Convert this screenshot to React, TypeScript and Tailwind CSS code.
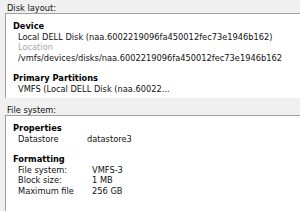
import React from 'react';

function Section({ title, children }: { title: string; children: React.ReactNode }) {
  return (
    <div>
      <div className="font-bold text-black">{title}</div>
      <div className="pl-[5px]">{children}</div>
    </div>
  );
}

export default function App() {
  return (
    <div
      className="w-[300px] h-[211px] overflow-hidden bg-[#f0f0f0] text-[9.2px] leading-[10.6px] text-[#111]"
      style={{ fontFamily: '"DejaVu Sans Condensed", "Liberation Sans", Arial, sans-serif' }}
    >
      <div className="pl-[7px] pt-[3px] h-[13px]">Disk layout:</div>
      <div className="ml-[5px] h-[85px] bg-white border-t border-l border-[#a0a0a0] pl-[7px] pt-[7px] whitespace-nowrap overflow-hidden">
        <Section title="Device">
          <div>Local DELL Disk (naa.6002219096fa450012fec73e1946b162)</div>
          <div className="text-[#a8a8a8]">Location</div>
          <div>/vmfs/devices/disks/naa.6002219096fa450012fec73e1946b162</div>
        </Section>
        <div className="h-[10px]" />
        <Section title="Primary Partitions">
          <div>VMFS (Local DELL Disk (naa.60022...</div>
        </Section>
      </div>
      <div className="pl-[7px] pt-[7px] h-[17px]">File system:</div>
      <div className="ml-[5px] h-[100px] bg-white border-t border-l border-[#a0a0a0] pl-[7px] pt-[7px] whitespace-nowrap">
        <Section title="Properties">
          <div className="flex">
            <span className="w-[69px]">Datastore</span>
            <span>datastore3</span>
          </div>
        </Section>
        <div className="h-[10px]" />
        <Section title="Formatting">
          {[
            ['File system:', 'VMFS-3'],
            ['Block size:', '1 MB'],
            ['Maximum file', '256 GB'],
          ].map(([k, v]) => (
            <div key={k} className="flex">
              <span className="w-[74px]">{k}</span>
              <span>{v}</span>
            </div>
          ))}
        </Section>
      </div>
    </div>
  );
}
